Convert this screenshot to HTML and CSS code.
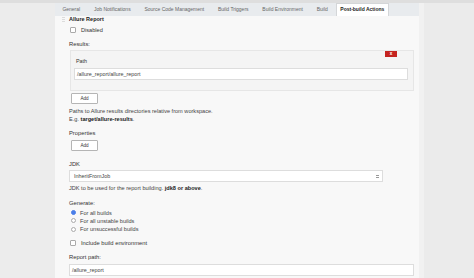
FILE: index.html
```html
<!DOCTYPE html>
<html>
<head>
<meta charset="utf-8">
<link rel="stylesheet" href="styles.css">
</head>
<body>
<div class="topline"></div>
<div class="page">
  <div class="side-left"></div>
  <div class="main">
    <div class="tabbar">
      <span class="tab">General</span>
      <span class="tab">Job Notifications</span>
      <span class="tab">Source Code Management</span>
      <span class="tab">Build Triggers</span>
      <span class="tab">Build Environment</span>
      <span class="tab">Build</span>
      <span class="tab active">Post-build Actions</span>
    </div>
    <div class="content">
      <div class="section-title"><span class="grip"></span>Allure Report</div>
      <label class="check-row first"><span class="box"></span>Disabled</label>
      <div class="label results">Results:</div>
      <div class="repeat">
        <div class="x-row"><span class="xbtn">x</span></div>
        <div class="label path-label">Path</div>
        <div class="input">/allure_report/allure_report</div>
      </div>
      <div class="btn">Add</div>
      <div class="help h1">Paths to Allure results directories relative from workspace.<br>E.g. <b>target/allure-results</b>.</div>
      <div class="label props">Properties</div>
      <div class="btn btn2">Add</div>
      <div class="label jdk">JDK</div>
      <div class="select">InheritFromJob<span class="arrow"></span></div>
      <div class="help h2">JDK to be used for the report building. <b>jdk8 or above</b>.</div>
      <div class="label gen">Generate:</div>
      <div class="radios">
        <label class="radio-row"><span class="radio on"></span>For all builds</label>
        <label class="radio-row"><span class="radio"></span>For all unstable builds</label>
        <label class="radio-row"><span class="radio"></span>For unsuccessful builds</label>
      </div>
      <label class="check-row include"><span class="box"></span>Include build environment</label>
      <div class="label rpath">Report path:</div>
      <div class="input wide">/allure_report</div>
    </div>
  </div>
  <div class="side-right"></div>
</div>
</body>
</html>
```
FILE: styles.css
```css
html, body {
  margin: 0;
  padding: 0;
  background: #ebebeb;
  font-family: "Liberation Sans", Arial, sans-serif;
  font-size: 5px;
  color: #333;
}
.topline {
  height: 3px;
  background: #dedede;
}
.page {
  display: flex;
  width: 474px;
  height: 275px;
  overflow: hidden;
}
.side-left {
  width: 55px;
  background: #ececec;
  flex: none;
}
.side-right {
  flex: 1;
  background: #ebebeb;
  border-left: 5px solid #f1f1f1;
}
.main {
  width: 364px;
  flex: none;
  background: #f8f8f8;
  display: flex;
  flex-direction: column;
}
.tabbar {
  height: 13px;
  flex: none;
  background: #e8ebee;
  display: flex;
  align-items: stretch;
  padding-left: 0.5px;
  box-sizing: border-box;
}
.tab {
  color: #666;
  font-size: 5px;
  padding: 0 6.9px;
  line-height: 12px;
}
.tab.active {
  background: #fff;
  color: #222;
  font-weight: bold;
  border: 1px solid #d4d6d8;
  border-bottom: none;
  padding: 0 3.6px;
  margin-left: 1px;
  line-height: 11px;
}
.content {
  padding: 1px 5px 0 14px;
  display: flex;
  flex-direction: column;
  align-items: flex-start;
}
.section-title {
  font-weight: bold;
  font-size: 5.5px;
  color: #222;
  position: relative;
  height: 5px;
  line-height: 5px;
}
.grip {
  position: absolute;
  left: -7px;
  top: 0;
  width: 3px;
  height: 6px;
  background: repeating-linear-gradient(#dcdcdc 0 1px, transparent 1px 2px);
}
.check-row {
  display: flex;
  align-items: center;
  height: 9px;
  color: #333;
  font-size: 5.6px;
  margin-left: 1px;
}
.check-row.first {
  margin-top: 3px;
}
.box {
  width: 4px;
  height: 4px;
  border: 1px solid #aaa;
  border-radius: 1px;
  background: #fff;
  margin-right: 5px;
}
.label {
  font-size: 5.8px;
  color: #333;
  height: 8px;
  line-height: 8px;
}
.label.results {
  margin-top: 6px;
}
.repeat {
  align-self: stretch;
  margin: 2px 0 0 1px;
  background: #f4f4f4;
  border: 1px solid #e6e6e6;
  padding: 0 5px 10px 3px;
  display: flex;
  flex-direction: column;
}
.x-row {
  display: flex;
  justify-content: flex-end;
  padding-right: 11px;
  height: 6px;
}
.xbtn {
  width: 12px;
  height: 6px;
  background: #c4231f;
  color: #fff;
  font-size: 4.5px;
  font-weight: bold;
  text-align: center;
  line-height: 6px;
}
.path-label {
  padding-left: 2px;
  font-size: 5.4px;
}
.input {
  background: #fff;
  border: 1px solid #ddd;
  height: 10px;
  line-height: 10px;
  padding-left: 2px;
  color: #444;
  align-self: stretch;
  margin-top: 3px;
  font-size: 5.4px;
}
.btn {
  margin: 2px 0 0 2px;
  width: 25px;
  height: 9px;
  border: 1px solid #b5b5b5;
  border-radius: 1px;
  background: #fff;
  font-size: 4.6px;
  text-align: center;
  line-height: 9px;
  color: #333;
}
.btn.btn2 {
  margin-top: 3px;
}
.help {
  font-size: 5.6px;
  line-height: 7.5px;
  color: #444;
}
.help b {
  color: #222;
}
.help.h1 {
  margin-top: 4px;
}
.label.props {
  margin-top: 6px;
}
.label.jdk {
  margin-top: 9px;
}
.select {
  width: 308px;
  height: 10px;
  line-height: 10px;
  border: 1px solid #ddd;
  background: #fff;
  padding-left: 4px;
  margin-top: 2px;
  color: #444;
  position: relative;
  font-size: 5.4px;
}
.arrow {
  position: absolute;
  right: 3px;
  top: 4px;
  width: 3px;
  height: 1px;
  border-top: 1px solid #999;
  border-bottom: 1px solid #999;
}
.help.h2 {
  margin-top: 2.5px;
}
.label.gen {
  margin-top: 6.5px;
}
.radios {
  margin-top: 2px;
  display: flex;
  flex-direction: column;
}
.radio-row {
  display: flex;
  align-items: center;
  height: 8.3px;
  font-size: 5.6px;
  color: #444;
  margin-left: 2px;
}
.radio {
  width: 3px;
  height: 3px;
  border: 1px solid #aaa;
  border-radius: 50%;
  background: #fff;
  margin-right: 4px;
}
.radio.on {
  background: #4a7ee8;
  border-color: #4a7ee8;
}
.check-row.include {
  margin-top: 5px;
  font-size: 5.8px;
}
.label.rpath {
  margin-top: 6px;
}
.input.wide {
  margin-top: 2.5px;
}
```
